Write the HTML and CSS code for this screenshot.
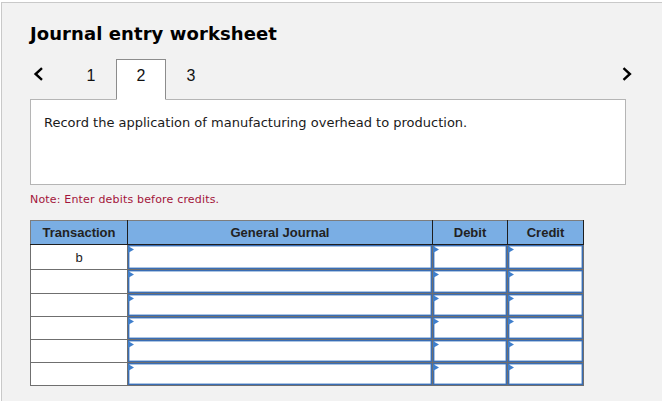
FILE: index.html
```html
<!DOCTYPE html>
<html>
<head>
<meta charset="utf-8">
<link rel="stylesheet" href="styles.css">
</head>
<body>
<div class="sheet">
  <h1 class="title">Journal entry worksheet</h1>
  <div class="tabs">
    <span class="nav prev"><svg width="11" height="14" viewBox="0 0 11 14"><polyline points="9,1.2 2.6,7 9,12.8" fill="none" stroke="#000" stroke-width="2.4"/></svg></span>
    <span class="tab">1</span>
    <span class="tab active">2</span>
    <span class="tab">3</span>
    <span class="nav next"><svg width="11" height="14" viewBox="0 0 11 14"><polyline points="1.5,1.2 7.9,7 1.5,12.8" fill="none" stroke="#000" stroke-width="2.4"/></svg></span>
  </div>
  <div class="prompt">Record the application of manufacturing overhead to production.</div>
  <p class="note">Note: Enter debits before credits.</p>
  <table class="journal">
    <colgroup>
      <col class="c-tr"><col class="c-gj"><col class="c-num"><col class="c-num2">
    </colgroup>
    <thead>
      <tr><th>Transaction</th><th>General Journal</th><th>Debit</th><th>Credit</th></tr>
    </thead>
    <tbody>
      <tr class="r1"><td class="tr">b</td><td><div class="field"></div></td><td><div class="field"></div></td><td><div class="field"></div></td></tr>
      <tr class="r2"><td class="tr"></td><td><div class="field"></div></td><td><div class="field"></div></td><td><div class="field"></div></td></tr>
      <tr><td class="tr"></td><td><div class="field"></div></td><td><div class="field"></div></td><td><div class="field"></div></td></tr>
      <tr><td class="tr"></td><td><div class="field"></div></td><td><div class="field"></div></td><td><div class="field"></div></td></tr>
      <tr><td class="tr"></td><td><div class="field"></div></td><td><div class="field"></div></td><td><div class="field"></div></td></tr>
      <tr><td class="tr"></td><td><div class="field"></div></td><td><div class="field"></div></td><td><div class="field"></div></td></tr>
    </tbody>
  </table>
</div>
</body>
</html>
```

FILE: styles.css
```css
html, body {
  margin: 0;
  background: #fff;
  overflow: hidden;
}

.sheet {
  box-sizing: border-box;
  margin: 2px 0 0 1px;
  height: 399px;
  border-top: 1px solid #c9c9c9;
  border-left: 1px solid #c9c9c9;
  background: #f2f2f2;
  padding: 20px 0 0 28px;
}

.title {
  margin: 0;
  font: bold 18px/22px "DejaVu Sans", Verdana, sans-serif;
  letter-spacing: 0.08px;
  color: #000;
}

.tabs {
  display: flex;
  align-items: flex-start;
  width: 603px;
  height: 40px;
  margin-top: 14px;
}

.nav {
  display: block;
  margin-top: 8px;
}

.nav svg {
  display: block;
}

.prev {
  width: 33px;
  padding-left: 3px;
}

.next {
  margin-left: auto;
  width: 11px;
}

.tab {
  position: relative;
  z-index: 1;
  box-sizing: border-box;
  width: 50px;
  height: 41px;
  padding-top: 7px;
  border: 1px solid transparent;
  text-align: center;
  font: 16px/18px "Liberation Sans", Arial, sans-serif;
  color: #111;
}

.tab.active {
  background: #fff;
  border-color: #8c8c8c;
  border-bottom-color: #fff;
}

.prompt {
  box-sizing: border-box;
  width: 596px;
  height: 86px;
  border: 1px solid #b5b5b5;
  background: #fff;
  padding: 15px 13px 0;
  font: 13px/16px "DejaVu Sans", Verdana, sans-serif;
  color: #1a1a1a;
}

.note {
  margin: 8px 0 0;
  font: 11px/14px "DejaVu Sans", Verdana, sans-serif;
  letter-spacing: 0.18px;
  color: #a3143a;
}

.journal {
  margin-top: 13px;
  border-collapse: collapse;
  table-layout: fixed;
  width: 553px;
}

.c-tr { width: 97px; }
.c-gj { width: 305px; }
.c-num { width: 75px; }
.c-num2 { width: 76px; }

.journal th {
  height: 23px;
  padding: 0;
  background: #7aaee4;
  border: 1px solid #1e1e1e;
  border-top-color: #7d7d7d;
  font: bold 13px "Liberation Sans", Arial, sans-serif;
  color: #222;
  text-align: center;
}

.journal th:first-child {
  border-left-color: #7d7d7d;
}

.journal td {
  padding: 0;
  background: #fff;
  border: 1px solid #6f6f6f;
  vertical-align: top;
}

.journal td.tr {
  vertical-align: middle;
  text-align: center;
  font: 13px "Liberation Sans", Arial, sans-serif;
  color: #222;
}

.field {
  position: relative;
  box-sizing: border-box;
  height: 22px;
  border: 1px solid #3a6db4;
  box-shadow: inset 0 0 0 0.5px #5b8bc8;
  background: #fff;
}

.r1 .field { height: 24px; }
.r2 .field { height: 23px; }

.field::before {
  content: "";
  position: absolute;
  left: -1px;
  top: 0;
  width: 6px;
  height: 7px;
  background: #3f7fcc;
  clip-path: polygon(0 0, 100% 50%, 0 100%);
}
```
